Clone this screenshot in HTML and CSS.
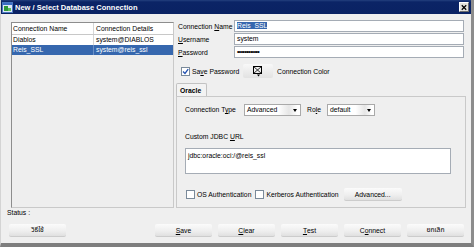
FILE: index.html
```html
<!DOCTYPE html>
<html lang="en">
    <head>
        <meta charset="UTF-8" />
        <title>New / Select Database Connection</title>
        <link rel="stylesheet" href="styles.css">
    </head>
    <body>
        <div class="window">
            <div class="titlebar">
                <svg class="app-icon" width="11" height="11" viewBox="0 0 11 11">
                    <rect x="0.5" y="0.5" width="10" height="10" fill="#dfe9f7" stroke="#4a78c0"/>
                    <rect x="1" y="1" width="9" height="2" fill="#3c6fc4"/>
                    <rect x="2" y="4" width="4" height="5" fill="#2f9a3a"/>
                    <rect x="6" y="6" width="3" height="3" fill="#5cc05a"/>
                </svg>
                <span class="title">New / Select Database Connection</span>
                <span class="close">
                    <svg width="9" height="9" viewBox="0 0 9 9">
                        <path d="M2 2 L7 7 M7 2 L2 7" stroke="#000" stroke-width="1.4"/>
                    </svg>
                </span>
            </div>

            <div class="main">
                <div class="conn-list">
                    <div class="list-row list-head">
                        <span class="col-name">Connection Name</span>
                        <span class="col-details">Connection Details</span>
                    </div>
                    <div class="list-row">
                        <span class="col-name">Diablos</span>
                        <span class="col-details">system@DIABLOS</span>
                    </div>
                    <div class="list-row selected">
                        <span class="col-name">Reis_SSL</span>
                        <span class="col-details">system@reis_ssl</span>
                    </div>
                </div>

                <div class="form">
                    <div class="field">
                        <label>Connection <u>N</u>ame</label>
                        <div class="input"><span class="sel-text">Reis_SSL</span></div>
                    </div>
                    <div class="field">
                        <label><u>U</u>sername</label>
                        <div class="input">system</div>
                    </div>
                    <div class="field">
                        <label><u>P</u>assword</label>
                        <div class="input dots">••••••••••••</div>
                    </div>

                    <div class="save-row">
                        <span class="check checked">
                            <svg width="7" height="7" viewBox="0 0 7 7">
                                <path d="M1 3.5 L3 5.5 L6.2 1.2" stroke="#2150b0" stroke-width="1.3" fill="none"/>
                            </svg>
                        </span>
                        <span class="save-label">Sa<u>v</u>e Password</span>
                        <span class="color-btn">
                            <svg width="12" height="11" viewBox="0 0 12 11">
                                <rect x="1.5" y="0.5" width="8" height="7" fill="none" stroke="#000"/>
                                <path d="M1.5 0.5 L9.5 7.5 M9.5 0.5 L1.5 7.5" stroke="#000" stroke-width="0.8"/>
                                <path d="M5 8.5 L8 8.5 L6.5 10.5 Z" fill="#000"/>
                            </svg>
                        </span>
                        <span>Connection Color</span>
                    </div>

                    <div class="tabs">
                        <div class="tab">Oracle</div>
                    </div>
                    <div class="tab-panel">
                        <div class="type-row">
                            <span class="type-label">Connection T<u>y</u>pe</span>
                            <span class="select type-select">Advanced<i class="arrow"></i></span>
                            <span class="role-label">Ro<u>l</u>e</span>
                            <span class="select role-select">default<i class="arrow"></i></span>
                        </div>
                        <div class="url-label">Custom JDBC <u>U</u>RL</div>
                        <div class="url-box">jdbc:oracle:oci:/@reis_ssl</div>
                        <div class="auth-row">
                            <span class="check"></span>
                            <span class="auth-label">OS Authentication</span>
                            <span class="check"></span>
                            <span class="auth-label">Kerberos Authentication</span>
                            <span class="btn adv-btn">Advanced...</span>
                        </div>
                    </div>
                </div>
            </div>

            <div class="status">Status :</div>

            <div class="buttons">
                <span class="btn">วิธีใช้</span>
                <span class="spacer"></span>
                <span class="btn"><u>S</u>ave</span>
                <span class="btn"><u>C</u>lear</span>
                <span class="btn"><u>T</u>est</span>
                <span class="btn">C<u>o</u>nnect</span>
                <span class="btn">ยกเลิก</span>
            </div>
        </div>
    </body>
</html>
```

FILE: styles.css
```css
body {
    margin: 0;
    font-family: "Liberation Sans", Arial, "Noto Sans Thai", "Noto Sans", sans-serif;
    font-size: 6.8px;
    color: #000;
    background: #ffffff;
}

u {
    text-decoration: underline;
    text-underline-offset: 1px;
}

.window {
    width: 474px;
    height: 247px;
    box-sizing: border-box;
    display: flex;
    flex-direction: column;
    background: #efefef;
    border-left: 1px solid #d4d4d4;
    border-right: 3px solid #8c8c8c;
    border-bottom: 4px solid #7e7e7e;
    overflow: hidden;
}

.titlebar {
    height: 14px;
    flex: none;
    display: flex;
    align-items: center;
    padding: 0 2px 0 1px;
    background: linear-gradient(#24407e 0, #0b2466 2px, #0a2263 100%);
    color: #fff;
}

.app-icon {
    margin-right: 2px;
}

.title {
    font-weight: bold;
    font-size: 7.5px;
    flex: 1;
}

.close {
    width: 10px;
    height: 10px;
    box-sizing: border-box;
    background: #e4e2dc;
    border: 1px solid #fff;
    border-right-color: #6b6b6b;
    border-bottom-color: #6b6b6b;
    display: flex;
    align-items: center;
    justify-content: center;
}

.main {
    display: flex;
    padding: 6px 0 0 10px;
    height: 189px;
    flex: none;
    box-sizing: border-box;
}

.conn-list {
    margin-top: 2px;
    width: 163px;
    height: 186px;
    box-sizing: border-box;
    background: #eeeeee;
    border: 1px solid #8d8d8d;
    border-right-color: #c9c9c9;
    border-bottom-color: #c9c9c9;
}

.list-row {
    display: flex;
    height: 10px;
    line-height: 10px;
    background: #fff;
}

.list-head {
    height: 12px;
    line-height: 12px;
    border-bottom: 1px solid #c8c8c8;
    box-sizing: border-box;
}

.col-name {
    width: 80px;
    padding-left: 1px;
    border-right: 1px solid #d6d6d6;
}

.col-details {
    padding-left: 2px;
}

.list-row.selected {
    background: #3667ae;
    color: #fff;
}

.list-row.selected .col-name {
    border-right-color: #6a8fc6;
}

.form {
    margin-left: 2px;
    width: 290px;
}

.field {
    display: flex;
    align-items: center;
    height: 12px;
    margin-bottom: 1px;
}

.field label {
    width: 56px;
    padding-left: 2px;
}

.input {
    width: 230px;
    height: 12px;
    box-sizing: border-box;
    border: 1px solid #a5acb5;
    background: #fff;
    line-height: 10px;
    padding-left: 2px;
}

.sel-text {
    background: #3667ae;
    color: #fff;
}

.dots {
    font-size: 7px;
    letter-spacing: -0.6px;
    font-weight: bold;
}

.save-row {
    display: flex;
    align-items: center;
    height: 14px;
    margin-top: 6px;
    padding-left: 5px;
}

.check {
    width: 9px;
    height: 9px;
    box-sizing: border-box;
    border: 1px solid #7a8a9a;
    background: #fff;
    display: inline-flex;
    align-items: center;
    justify-content: center;
    flex: none;
}

.save-label {
    margin-left: 2px;
    width: 51px;
}

.color-btn {
    width: 30px;
    height: 14px;
    box-sizing: border-box;
    background: linear-gradient(#f8f8f8, #e2e2e2);
    border-radius: 2px;
    display: flex;
    align-items: center;
    justify-content: center;
    margin-right: 4px;
}

.tabs {
    display: flex;
    margin-top: 5px;
}

.tab {
    font-weight: bold;
    height: 13px;
    line-height: 13px;
    padding: 0 5px 0 3px;
    background: #f3f3f3;
    border: 1px solid #c2c2c2;
    border-bottom: none;
    box-sizing: border-box;
    border-radius: 2px 2px 0 0;
}

.tab-panel {
    width: 290px;
    height: 112px;
    box-sizing: border-box;
    border: 1px solid #c9c9c9;
    background: #efefef;
    padding: 6px 0 0 8px;
}

.type-row {
    display: flex;
    align-items: center;
    height: 13px;
}

.type-label {
    width: 59px;
}

.select {
    position: relative;
    height: 12px;
    box-sizing: border-box;
    border: 1px solid #a9a9a9;
    background: linear-gradient(90deg, #fff 60%, #e6e6e6 80%, #fff 95%);
    line-height: 10px;
    padding-left: 2px;
}

.type-select {
    width: 57px;
}

.role-select {
    width: 48px;
}

.arrow {
    position: absolute;
    right: 3px;
    top: 4px;
    border-left: 2.5px solid transparent;
    border-right: 2.5px solid transparent;
    border-top: 3px solid #000;
}

.role-label {
    width: 20px;
    margin-left: 6px;
}

.url-label {
    margin-top: 17px;
    height: 8px;
    line-height: 8px;
}

.url-box {
    margin-top: 7px;
    width: 266px;
    height: 26px;
    box-sizing: border-box;
    border: 1px solid #a5acb5;
    background: #fff;
    padding: 3px 0 0 2px;
    line-height: 8px;
}

.auth-row {
    display: flex;
    align-items: center;
    margin-top: 14px;
    height: 13px;
}

.auth-row .check {
    margin-left: 1px;
}

.auth-label {
    margin: 0 3px 0 2px;
}

.btn {
    width: 57px;
    height: 13px;
    box-sizing: border-box;
    display: inline-flex;
    align-items: center;
    justify-content: center;
    background: linear-gradient(#fbfbfb, #eeeeee 60%, #e0e0e0);
    border-radius: 2px;
    border-bottom: 1px solid #cccccc;
}

.adv-btn {
    margin-left: 2px;
    width: 58px;
}

.status {
    padding-left: 6px;
    margin-top: 5px;
    height: 9px;
    line-height: 9px;
}

.buttons {
    display: flex;
    gap: 6px;
    padding: 0 0 0 8px;
    margin-top: 7px;
}

.spacer {
    width: 77px;
}
```
